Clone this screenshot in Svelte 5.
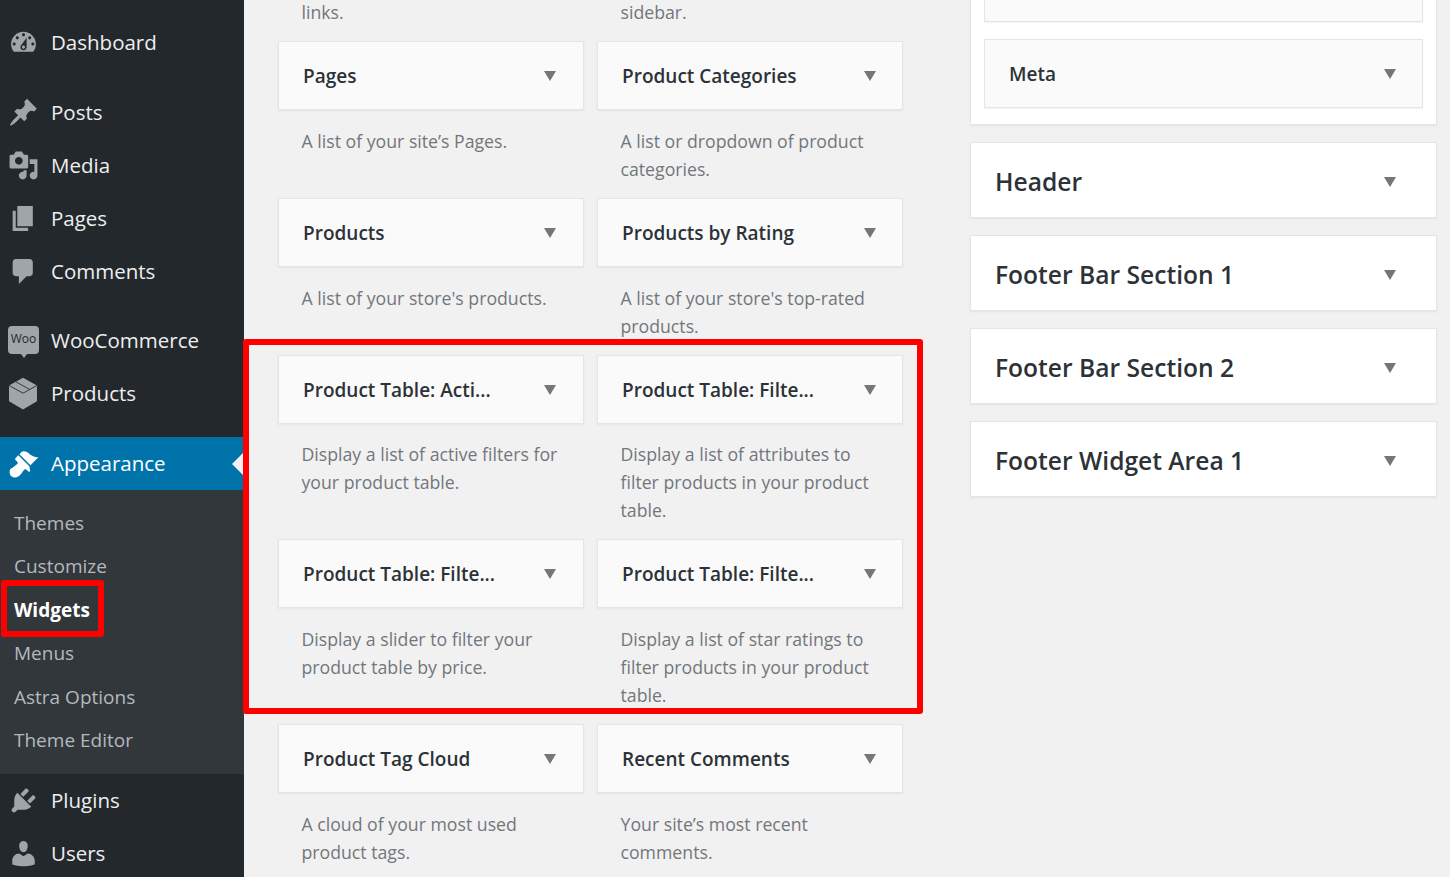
<script>
  const topMenu = [
    { label: "Dashboard", icon: "dashboard", sep: "sep" },
    { label: "Posts", icon: "post" },
    { label: "Media", icon: "media" },
    { label: "Pages", icon: "page" },
    { label: "Comments", icon: "comments", sep: "sep-tight" },
    { label: "WooCommerce", icon: "woo" },
    { label: "Products", icon: "box", sep: "sep" },
  ];
  const subMenu = ["Themes", "Customize", "Widgets", "Menus", "Astra Options", "Theme Editor"];

  const icons = {
    dashboard: "M3.76 16h12.48c1.1-1.37 1.76-3.11 1.76-5 0-4.42-3.58-8-8-8s-8 3.58-8 8c0 1.89.66 3.63 1.76 5zM10 4c.55 0 1 .45 1 1s-.45 1-1 1-1-.45-1-1 .45-1 1-1zM6 6c.55 0 1 .45 1 1s-.45 1-1 1-1-.45-1-1 .45-1 1-1zm8 0c.55 0 1 .45 1 1s-.45 1-1 1-1-.45-1-1 .45-1 1-1zm-5.37 5.55L12 7v6c0 1.1-.9 2-2 2s-2-.9-2-2c0-.57.24-1.08.63-1.45zM4 10c.55 0 1 .45 1 1s-.45 1-1 1-1-.45-1-1 .45-1 1-1zm12 0c.55 0 1 .45 1 1s-.45 1-1 1-1-.45-1-1 .45-1 1-1zm-5 3c0-.55-.45-1-1-1s-1 .45-1 1 .45 1 1 1 1-.45 1-1z",
    post: "M10.44 3.02l1.82-1.82 6.36 6.35-1.83 1.82c-1.05-.68-2.48-.57-3.41.36l-.75.75c-.92.93-1.04 2.35-.35 3.41l-1.83 1.82-2.41-2.41-2.8 2.79c-.42.42-3.38 2.71-3.8 2.29s1.86-3.39 2.28-3.81l2.79-2.79L4.1 9.36l1.83-1.82c1.05.69 2.48.57 3.4-.36l.75-.75c.93-.92 1.05-2.35.36-3.41z",
    media: "M13 11V4c0-.55-.45-1-1-1h-1.67L9 1H5L3.67 3H2c-.55 0-1 .45-1 1v7c0 .55.45 1 1 1h10c.55 0 1-.45 1-1zM7 4.5c1.38 0 2.5 1.12 2.5 2.5S8.38 9.5 7 9.5 4.5 8.38 4.5 7 5.62 4.5 7 4.5zM14 6h5v10.5c0 1.38-1.12 2.5-2.5 2.5S14 17.88 14 16.5s1.12-2.5 2.5-2.5c.17 0 .34.02.5.05V9h-3V6zm-4 8.05V13h2v3.5c0 1.38-1.12 2.5-2.5 2.5S7 17.88 7 16.5 8.12 14 9.5 14c.17 0 .34.02.5.05z",
    page: "M6 15V2h10v13H6zm-1 1h8v2H3V5h2v11z",
    comments: "M5 2h9c1.1 0 2 .9 2 2v7c0 1.1-.9 2-2 2h-2l-5 5v-5H5c-1.1 0-2-.9-2-2V4c0-1.1.9-2 2-2z",
    box: "M9.7 -.2l9 5v10.2l-9 5.4-9.05-5.4V4.8z",
    brush: "M14.48 11.06L7.41 3.99l1.5-1.5c.5-.56 2.3-.47 3.51.32 1.21.8 1.43 1.28 2.91 2.1 1.18.64 2.45 1.26 4.45.85zm-.71.71L6.7 4.7 4.93 6.47c-.39.39-.39 1.02 0 1.41l1.06 1.06c.39.39.39 1.03 0 1.42-.6.6-1.43 1.11-2.21 1.69-.35.26-.7.53-1.01.84C1.43 13.23.93 14.21 1.04 15.8c.14 1.84 1.29 3 3.14 3.16 1.59.11 2.54-.39 3.77-1.72.31-.31.58-.66.84-1.01.58-.78 1.09-1.61 1.69-2.21.39-.39 1.03-.39 1.42 0l1.06 1.06c.39.39 1.02.39 1.41 0z",
    plugin: "M13.11 4.36L9.87 7.6 8 5.73l3.24-3.24c.35-.34 1.05-.2 1.56.32.52.51.66 1.21.31 1.55zm-8 1.77l.91-1.12 9.01 9.01-1.19.84c-.71.71-2.63 1.16-3.82 1.16H6.14L4.9 17.26c-.59.59-1.54.59-2.12 0-.59-.58-.59-1.53 0-2.12l1.24-1.24v-3.88c0-1.13.4-3.19 1.09-3.89zm7.26 3.97l3.24-3.24c.34-.35 1.04-.21 1.55.31.52.51.66 1.21.31 1.55l-3.24 3.25z",
    user: "M10 9.25c-2.27 0-2.73-3.44-2.73-3.44C7 4.02 7.82 2 9.97 2c2.16 0 2.98 2.02 2.71 3.81 0 0-.41 3.44-2.68 3.44zm0 2.57L12.72 10c2.39 0 4.52 2.33 4.52 4.53v2.49s-3.65 1.13-7.24 1.13c-3.65 0-7.24-1.13-7.24-1.13v-2.49c0-2.25 1.94-4.48 4.47-4.48z",
  };

  const widgetRows = [
    [
      { title: "Pages", desc: "A list of your site’s Pages." },
      { title: "Product Categories", desc: "A list or dropdown of product categories." },
    ],
    [
      { title: "Products", desc: "A list of your store's products." },
      { title: "Products by Rating", desc: "A list of your store's top-rated products." },
    ],
    [
      { title: "Product Table: Acti...", desc: "Display a list of active filters for your product table." },
      { title: "Product Table: Filte...", desc: "Display a list of attributes to filter products in your product table." },
    ],
    [
      { title: "Product Table: Filte...", desc: "Display a slider to filter your product table by price." },
      { title: "Product Table: Filte...", desc: "Display a list of star ratings to filter products in your product table." },
    ],
    [
      { title: "Product Tag Cloud", desc: "A cloud of your most used product tags." },
      { title: "Recent Comments", desc: "Your site’s most recent comments." },
    ],
  ];

  const areas = ["Header", "Footer Bar Section 1", "Footer Bar Section 2", "Footer Widget Area 1"];
</script>

<div class="page">
  <aside class="sidebar">
    <ul class="menu">
      {#each topMenu as item}
        <li class="item {item.sep ?? ''}">
          {#if item.icon === "woo"}
            <span class="woo"><span>Woo</span></span>
          {:else}
            <svg class="icon" viewBox="0 0 20 20">
              <path fill-rule="evenodd" d={icons[item.icon]} />
              {#if item.icon === "box"}
                <path class="seam" d="M.65 4.8l9.05 5 9-5M5 2.4l9 5" />
              {/if}
            </svg>
          {/if}
          <span>{item.label}</span>
        </li>
      {/each}
      <li class="item current">
        <svg class="icon" viewBox="0 0 20 20"><path d={icons.brush} /></svg>
        <span>Appearance</span>
      </li>
      <li>
        <ul class="submenu">
          {#each subMenu as name}
            <li class:active={name === "Widgets"}>{name}</li>
          {/each}
        </ul>
      </li>
      <li class="item">
        <svg class="icon" viewBox="0 0 20 20"><path d={icons.plugin} /></svg>
        <span>Plugins</span>
      </li>
      <li class="item">
        <svg class="icon" viewBox="0 0 20 20"><path d={icons.user} /></svg>
        <span>Users</span>
      </li>
    </ul>
  </aside>

  <main class="content">
    <section class="available">
      <div class="row cut">
        <p class="desc">links.</p>
        <p class="desc">sidebar.</p>
      </div>
      {#each widgetRows as row}
        <div class="row">
          {#each row as widget}
            <div class="widget">
              <div class="card">
                <span>{widget.title}</span>
                <i class="arrow"></i>
              </div>
              <p class="desc">{widget.desc}</p>
            </div>
          {/each}
        </div>
      {/each}
    </section>

    <section class="areas">
      <div class="area open">
        <div class="card inner">
          <span>Navigation</span>
          <i class="arrow"></i>
        </div>
        <div class="card inner">
          <span>Meta</span>
          <i class="arrow"></i>
        </div>
      </div>
      {#each areas as name}
        <div class="area head">
          <h3>{name}</h3>
          <i class="arrow"></i>
        </div>
      {/each}
    </section>
  </main>

  <div class="mark mark-list"></div>
  <div class="mark mark-menu"></div>
</div>

<style>
  :global(body) {
    margin: 0;
    background: #f1f1f1;
    overflow: hidden;
  }

  * {
    box-sizing: border-box;
  }

  ul {
    list-style: none;
    margin: 0;
    padding: 0;
  }

  .page {
    position: relative;
    display: flex;
    height: 877px;
    overflow: hidden;
    font-family: "Open Sans", "Noto Sans", sans-serif;
    background: #f1f1f1;
  }

  /* left admin menu */
  .sidebar {
    width: 244px;
    flex: none;
    background: #23282d;
    padding-top: 16px;
    color: #eee;
    font-size: 20.5px;
  }

  .item {
    display: flex;
    align-items: center;
    gap: 12px;
    height: 53px;
    padding-left: 8px;
    padding-bottom: 1px;
  }

  .item.sep {
    margin-bottom: 17px;
  }

  .item.sep-tight {
    margin-bottom: 16px;
  }

  .icon {
    width: 31px;
    height: 31px;
    flex: none;
    fill: #a0a5aa;
    overflow: visible;
  }

  .seam {
    fill: none;
    stroke: #23282d;
    stroke-width: 0.55;
  }

  .woo {
    width: 31px;
    height: 28px;
    flex: none;
    position: relative;
    background: #a0a5aa;
    border-radius: 4px;
    color: #23282d;
    font-size: 12px;
    line-height: 26px;
    text-align: center;
  }

  .woo::after {
    content: "";
    position: absolute;
    left: 13px;
    bottom: -4px;
    border-style: solid;
    border-width: 4px 3px 0;
    border-color: #a0a5aa transparent transparent;
  }

  .current {
    position: relative;
    background: #0073aa;
    color: #fff;
  }

  .current .icon {
    fill: #fff;
  }

  .current::after {
    content: "";
    position: absolute;
    right: 0;
    top: 50%;
    margin-top: -12px;
    border-style: solid;
    border-width: 12px 12px 12px 0;
    border-color: transparent #f1f1f1 transparent transparent;
  }

  .submenu {
    background: #32373c;
    padding: 11.5px 0 11.5px 14px;
    color: #b4b9be;
    font-size: 19px;
  }

  .submenu li {
    height: 43.5px;
    line-height: 43.5px;
  }

  .submenu .active {
    color: #fff;
    font-weight: 700;
  }

  /* widgets screen */
  .content {
    flex: 1;
    display: flex;
    align-items: flex-start;
    min-width: 0;
  }

  .available {
    width: 659px;
    margin-left: 34px;
    flex: none;
  }

  .row {
    display: grid;
    grid-template-columns: 306px 306px;
    column-gap: 13px;
  }

  .row.cut {
    margin-top: -2px;
    padding-bottom: 15px;
  }

  .card {
    display: flex;
    align-items: center;
    justify-content: space-between;
    height: 69px;
    padding: 0 27px 0 24px;
    background: #fafafa;
    border: 1px solid #e5e5e5;
    box-shadow: 0 1px 2px rgba(0, 0, 0, 0.06);
    color: #2c3237;
    font-size: 19px;
    font-weight: 600;
  }

  .widget:nth-child(2) .card {
    padding-right: 26px;
  }

  .arrow {
    flex: none;
    width: 0;
    height: 0;
    border-style: solid;
    border-width: 10px 6.5px 0;
    border-color: #72777c transparent transparent;
  }

  .desc {
    margin: 0;
    padding-left: 23.5px;
    padding-right: 10px;
    font-size: 17.7px;
    line-height: 28px;
    color: #72777c;
  }

  .widget .desc {
    padding-top: 17px;
    padding-bottom: 15px;
  }

  /* third widget row sits a pixel tighter */
  .row:nth-child(4) .widget .desc {
    padding-top: 16px;
  }

  /* sidebar areas on the right */
  .areas {
    width: 467px;
    margin-left: 33px;
    margin-top: -61px;
    flex: none;
    display: flex;
    flex-direction: column;
    gap: 17px;
  }

  .area {
    background: #fff;
    border: 1px solid #e5e5e5;
    box-shadow: 0 1px 2px rgba(0, 0, 0, 0.06);
  }

  .area.open {
    padding: 13px 13px 16px;
    display: flex;
    flex-direction: column;
    gap: 17px;
  }

  .area.open .card {
    box-shadow: 0 1px 1px rgba(0, 0, 0, 0.04);
    padding-right: 26px;
  }

  .head {
    display: flex;
    align-items: center;
    justify-content: space-between;
    height: 76px;
    padding: 2px 40px 0 24px;
  }

  .head .arrow {
    margin-top: 1px;
  }

  .head h3 {
    margin: 0;
    font-size: 24.6px;
    font-weight: 600;
    color: #2c3237;
  }

  .mark {
    position: absolute;
    border: 6px solid #f00;
    border-radius: 3px;
    pointer-events: none;
  }

  .mark-list {
    left: 243px;
    top: 339px;
    width: 680px;
    height: 375px;
  }

  .mark-menu {
    left: 1px;
    top: 580px;
    width: 103px;
    height: 57px;
  }
</style>
